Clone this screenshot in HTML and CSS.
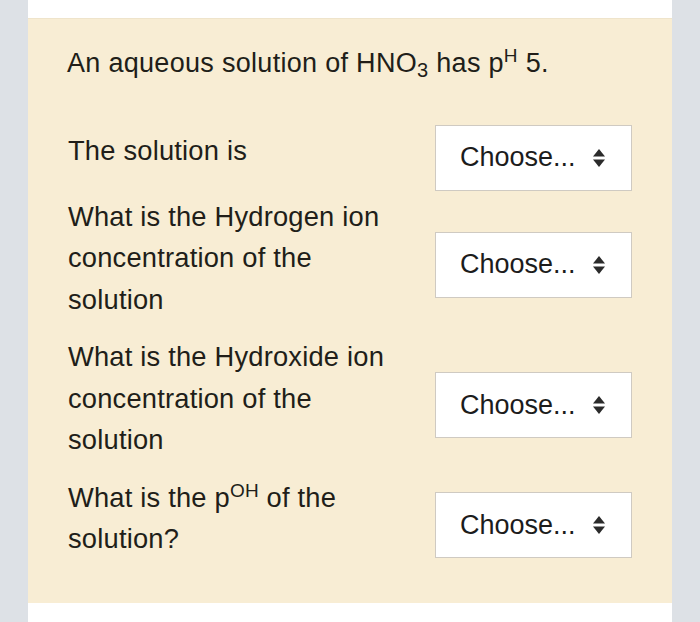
FILE: index.html
```html
<!DOCTYPE html>
<html>
<head>
<meta charset="utf-8">
<link rel="stylesheet" href="styles.css">
</head>
<body>
<div class="page">
  <div class="panel">
    <p class="question">An aqueous solution of HNO<sub>3</sub> has p<sup>H</sup> 5.</p>
    <div class="rows">
      <div class="row first">
        <div class="label">The solution is</div>
        <div class="select"><span>Choose...</span>
          <svg class="arrows" width="12" height="18" viewBox="0 0 12 18"><polygon points="0,7.5 6,0 12,7.5"/><polygon points="0,10.5 12,10.5 6,18"/></svg>
        </div>
      </div>
      <div class="row">
        <div class="label">What is the Hydrogen ion concentration of the solution</div>
        <div class="select"><span>Choose...</span>
          <svg class="arrows" width="12" height="18" viewBox="0 0 12 18"><polygon points="0,7.5 6,0 12,7.5"/><polygon points="0,10.5 12,10.5 6,18"/></svg>
        </div>
      </div>
      <div class="row">
        <div class="label">What is the Hydroxide ion concentration of the solution</div>
        <div class="select"><span>Choose...</span>
          <svg class="arrows" width="12" height="18" viewBox="0 0 12 18"><polygon points="0,7.5 6,0 12,7.5"/><polygon points="0,10.5 12,10.5 6,18"/></svg>
        </div>
      </div>
      <div class="row">
        <div class="label">What is the p<sup>OH</sup> of the solution?</div>
        <div class="select"><span>Choose...</span>
          <svg class="arrows" width="12" height="18" viewBox="0 0 12 18"><polygon points="0,7.5 6,0 12,7.5"/><polygon points="0,10.5 12,10.5 6,18"/></svg>
        </div>
      </div>
    </div>
  </div>
</div>
</body>
</html>
```

FILE: styles.css
```css
html, body {
  margin: 0;
  padding: 0;
}
body {
  background: #dde1e6;
  font-family: "Liberation Sans", Arial, sans-serif;
  color: #211e19;
}
.page {
  margin: 0 28px;
  background: #ffffff;
  padding: 18px 0 19px;
  height: 585px;
}
.panel {
  background: #f8edd4;
  height: 585px;
  box-sizing: border-box;
  padding: 24px 40px 0 39px;
  border-top: 1px solid #efe4cb;
}
.question {
  margin: 0 0 33px;
  font-size: 27px;
  line-height: 41.5px;
  letter-spacing: 0.3px;
}
.question sub {
  font-size: 20px;
  line-height: 1;
  vertical-align: -5px;
}
sup {
  font-size: 19px;
  line-height: 1;
  vertical-align: 10px;
}
.rows {
  display: flex;
  flex-direction: column;
  gap: 16px;
}
.row.first {
  margin-bottom: -4px;
}
.row {
  display: flex;
  align-items: center;
  justify-content: space-between;
}
.label {
  width: 340px;
  font-size: 27.3px;
  line-height: 41.5px;
  letter-spacing: 0.2px;
  padding-left: 1px;
}
.select {
  box-sizing: border-box;
  width: 197px;
  height: 66px;
  margin: 7px 0 -7px;
  background: #ffffff;
  border: 1px solid #cfcac2;
  display: flex;
  align-items: center;
  justify-content: space-between;
  padding: 0 26px 0 24px;
  font-size: 27px;
  color: #1c1c1c;
}
.arrows {
  fill: #2b2b2b;
  display: block;
}
```
